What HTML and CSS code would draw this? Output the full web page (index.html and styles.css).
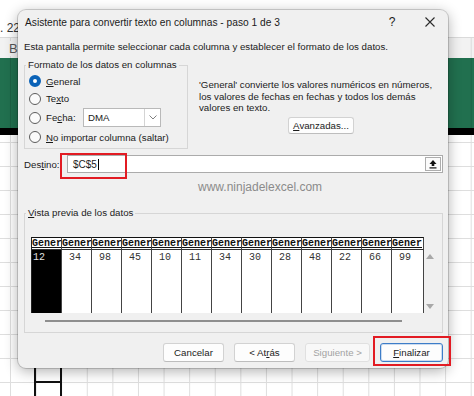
FILE: index.html
```html
<!DOCTYPE html>
<html lang="es">
<head>
    <meta charset="UTF-8">
    <meta name="viewport" content="width=device-width, initial-scale=1.0">
    <title>Asistente para convertir texto en columnas</title>
    <link rel="stylesheet" href="styles.css">
</head>
<body>
    <!-- hoja de Excel detras del dialogo -->
    <div class="sheet">
        <div class="sheet-top"></div>
        <div class="sheet-formula"><span class="cell-ref">. 22</span></div>
        <div class="sheet-headers"><span class="col-letter">B</span></div>
        <div class="sheet-band"></div>
        <div class="sheet-rule"></div>
        <div class="sheet-grid"><div class="sheet-sel"></div></div>
    </div>

    <div class="dialog">
        <div class="titlebar">
            <span class="title">Asistente para convertir texto en columnas - paso 1 de 3</span>
            <span class="help">?</span>
            <span class="close">
                <svg width="10" height="10" viewBox="0 0 10 10"><path d="M0.5 0.5 L9.5 9.5 M9.5 0.5 L0.5 9.5" stroke="#2b2b2b" stroke-width="1.1" fill="none"/></svg>
            </span>
        </div>

        <p class="intro">Esta pantalla permite seleccionar cada columna y establecer el formato de los datos.</p>

        <div class="format-row">
            <fieldset class="group format">
                <legend>Formato de los datos en columnas</legend>
                <div class="radio r1"><span class="dot checked"></span><span><u>G</u>eneral</span></div>
                <div class="radio r2"><span class="dot"></span><span>Te<u>x</u>to</span></div>
                <div class="radio r3">
                    <span class="dot"></span><span class="fecha-label">Fe<u>c</u>ha:</span>
                    <span class="select">
                        <span class="select-value">DMA</span>
                        <span class="select-caret">
                            <svg width="8" height="5" viewBox="0 0 8 5"><path d="M0.5 0.5 L4 4 L7.5 0.5" stroke="#808080" stroke-width="1" fill="none"/></svg>
                        </span>
                    </span>
                </div>
                <div class="radio r4"><span class="dot"></span><span><u>N</u>o importar columna (saltar)</span></div>
            </fieldset>

            <div class="info">
                <p>'General' convierte los valores numéricos en números,<br>los valores de fechas en fechas y todos los demás<br>valores en texto.</p>
                <button class="btn btn-advanced"><u>A</u>vanzadas...</button>
            </div>
        </div>

        <div class="dest-row">
            <span class="dest-label">Des<u>t</u>ino:</span>
            <div class="dest-input">
                <span class="dest-value">$C$5</span><span class="caret-bar"></span>
                <span class="pick-btn">
                    <svg width="10" height="10" viewBox="0 0 10 10"><path d="M5 1 L8.5 5 L6.3 5 L6.3 7 L3.7 7 L3.7 5 L1.5 5 Z" fill="#111"/><rect x="1.5" y="8.3" width="7" height="1.2" fill="#111"/></svg>
                </span>
            </div>
            <span class="mark mark-dest"></span>
        </div>

        <div class="watermark">www.ninjadelexcel.com</div>

        <fieldset class="group preview">
            <legend><u>V</u>ista previa de los datos</legend>
            <div class="preview-body">
                <div class="preview-main">
                    <div class="preview-table">
                        <div class="ph">Gener</div><div class="ph">Gener</div><div class="ph">Gener</div><div class="ph">Gener</div>
                        <div class="ph">Gener</div><div class="ph">Gener</div><div class="ph">Gener</div><div class="ph">Gener</div>
                        <div class="ph">Gener</div><div class="ph">Gener</div><div class="ph">Gener</div><div class="ph">Gener</div>
                        <div class="ph">Gener</div>
                        <div class="pd selected">12</div><div class="pd">&nbsp;34</div><div class="pd">&nbsp;98</div><div class="pd">&nbsp;45</div>
                        <div class="pd">&nbsp;10</div><div class="pd">&nbsp;11</div><div class="pd">&nbsp;34</div><div class="pd">&nbsp;30</div>
                        <div class="pd">&nbsp;28</div><div class="pd">&nbsp;48</div><div class="pd">&nbsp;22</div><div class="pd">&nbsp;66</div>
                        <div class="pd">&nbsp;99</div>
                    </div>
                    <div class="hscroll"></div>
                </div>
                <div class="vscroll">
                    <svg width="8" height="5" viewBox="0 0 8 5"><polygon points="4,0 8,5 0,5" fill="#a8a8a8"/></svg>
                    <svg width="8" height="5" viewBox="0 0 8 5"><polygon points="0,0 8,0 4,5" fill="#a8a8a8"/></svg>
                </div>
            </div>
        </fieldset>

        <div class="buttons">
            <button class="btn w61">Cancelar</button>
            <button class="btn w61">&lt; At<u>r</u>ás</button>
            <button class="btn w65" disabled>Siguiente &gt;</button>
            <span class="finish-wrap">
                <button class="btn w63 btn-default"><u>F</u>inalizar</button>
                <span class="mark mark-finish"></span>
            </span>
        </div>
    </div>
</body>
</html>
```

FILE: styles.css
```css
body {
    margin: 0;
    width: 474px;
    height: 396px;
    overflow: hidden;
    position: relative;
    background: #fff;
    font-family: "Liberation Sans", Arial, sans-serif;
}

/* hoja de fondo */
.sheet {
    height: 396px;
}
.sheet-top {
    height: 10px;
    background: #fff;
}
.sheet-formula {
    height: 28px;
    box-sizing: border-box;
    padding-top: 10px;
    line-height: 16px;
    background: #fff;
    border-bottom: 1px solid #dadada;
    font-size: 12px;
    color: #333;
}
.sheet-headers {
    height: 20px;
    box-sizing: border-box;
    padding-left: 9px;
    line-height: 22px;
    background-color: #f2f2f2;
    background-image: linear-gradient(to right, #dadada 1px, transparent 1px);
    background-size: 25.6px 100%;
    background-position: 10px 0;
    font-size: 13px;
    color: #555;
}
.col-letter {
    background: #f2f2f2;
}
.sheet-band {
    height: 70px;
    background-color: #21704f;
    background-image: linear-gradient(to right, rgba(0, 0, 0, 0.12) 1px, rgba(0, 0, 0, 0) 1px);
    background-size: 25.6px 100%;
    background-position: 10px 0;
}
.sheet-rule {
    height: 7px;
    background-color: #000;
}
.sheet-grid {
    position: relative;
    height: 261px;
    background-color: #fff;
    background-image:
        linear-gradient(to right, #dedede 1px, rgba(255, 255, 255, 0) 1px),
        linear-gradient(to bottom, #dedede 1px, rgba(255, 255, 255, 0) 1px);
    background-size: 25.6px 24px;
    background-position: 10px 7px;
}
.sheet-sel {
    position: absolute;
    left: 34px;
    top: 225px;
    width: 24px;
    height: 40px;
    border-left: 2px solid #111;
    border-right: 2px solid #111;
}
.sheet-sel::after {
    content: "";
    position: absolute;
    left: 0;
    right: 0;
    top: 21px;
    height: 2px;
    background: #111;
}

/* dialogo */
.dialog {
    position: absolute;
    left: 18px;
    top: 10px;
    width: 430px;
    height: 358px;
    box-sizing: border-box;
    padding: 0 5px 0 6px;
    background: #f0f0f0;
    border-radius: 8px;
    box-shadow: 0 0 0 1px rgba(0, 0, 0, 0.16), 0 3px 14px rgba(0, 0, 0, 0.32);
    font-size: 9.7px;
    color: #1b1b1b;
}
.titlebar {
    display: flex;
    align-items: center;
    height: 24px;
    margin-left: 1px;
    font-size: 10.2px;
}
.title {
    flex: 1;
}
.help {
    width: 12px;
    margin-right: 24px;
    text-align: center;
    font-size: 12px;
}
.close {
    width: 16px;
    height: 24px;
    margin-right: 5px;
    display: flex;
    align-items: center;
    justify-content: center;
}
.intro {
    margin: 0;
    padding-top: 6px;
    line-height: 14px;
}

.group {
    margin: 0;
    min-width: 0;
    border: 1px solid #d6d6d6;
}
.group legend {
    line-height: 14px;
    padding: 0 2px;
}

.format-row {
    display: flex;
    align-items: flex-start;
    height: 91px;
    margin-top: 4px;
}
.format {
    width: 164px;
    height: 91px;
    box-sizing: border-box;
    padding: 0 4px 2px 4px;
}
.format legend {
    margin-left: -3px;
}
.radio {
    display: flex;
    align-items: center;
}
.r1 { height: 18px; }
.r2 { height: 17px; }
.r3 { height: 21px; }
.r4 { height: 18px; }
.dot {
    width: 12px;
    height: 12px;
    box-sizing: border-box;
    margin-right: 5px;
    border: 1px solid #5c5c5c;
    border-radius: 50%;
    background: #fbfbfb;
}
.dot.checked {
    border: 4px solid #0a62b7;
    background: #fff;
}
.fecha-label {
    width: 37px;
}
.select {
    width: 78px;
    height: 19px;
    box-sizing: border-box;
    display: flex;
    background: #fff;
    border: 1px solid #b9b9b9;
}
.select-value {
    flex: 1;
    padding-left: 4px;
    line-height: 17px;
}
.select-caret {
    width: 15px;
    display: flex;
    align-items: center;
    justify-content: center;
    border-left: 1px solid #d4d4d4;
}

.info {
    width: 244px;
    margin-left: 11px;
    padding-top: 21px;
}
.info p {
    margin: 0;
    line-height: 11.5px;
}

.btn {
    height: 19px;
    box-sizing: border-box;
    padding: 0;
    background: #fdfdfd;
    border: 1px solid #d2d2d2;
    border-bottom-color: #bdbdbd;
    border-radius: 3px;
    font-family: inherit;
    font-size: 9.7px;
    color: #1b1b1b;
}
.btn:disabled {
    color: #a3a3a3;
    background: #f8f8f8;
    border-color: #e0e0e0;
}
.btn-advanced {
    display: block;
    width: 66px;
    height: 17px;
    margin: 3px auto 0;
}
.btn-default {
    border: 1px solid #3d7dc8;
    box-shadow: inset 0 0 0 1px rgba(61, 125, 200, 0.25);
}
.w61 { width: 61px; }
.w63 { width: 63px; }
.w65 { width: 65px; }

.dest-row {
    position: relative;
    display: flex;
    align-items: center;
    height: 18px;
    margin-top: 6px;
}
.dest-label {
    width: 43px;
}
.dest-input {
    flex: 1;
    height: 18px;
    box-sizing: border-box;
    display: flex;
    align-items: center;
    padding-left: 5px;
    background: #fff;
    border: 1px solid #ababab;
}
.dest-value {
    font-size: 10px;
}
.caret-bar {
    width: 1px;
    height: 11px;
    margin-left: 1px;
    background: #000;
}
.pick-btn {
    width: 16px;
    height: 14px;
    box-sizing: border-box;
    margin-left: auto;
    margin-right: 1px;
    display: flex;
    align-items: center;
    justify-content: center;
    border: 1px solid #adadad;
    background: #fbfbfb;
}

.mark {
    position: absolute;
    box-sizing: border-box;
    border: 2px solid #e21b23;
}
.mark-dest {
    left: 36px;
    top: -2px;
    width: 67px;
    height: 26px;
}

.watermark {
    margin: 7px 0 0 174px;
    line-height: 14px;
    font-size: 12px;
    color: #8b8b8b;
}

.preview {
    margin-top: 12px;
    padding: 17px 6px 10px 6px;
}
.preview legend {
    margin-left: -5px;
}
.preview-body {
    display: flex;
}
.preview-table {
    display: grid;
    grid-template-columns: repeat(12, 30px) 32px;
    width: 392px;
    box-sizing: border-box;
    border-left: 1px solid #222;
    background: #fff;
    font-family: "Liberation Mono", "Courier New", monospace;
    font-size: 10px;
}
.ph {
    height: 13px;
    box-sizing: border-box;
    overflow: hidden;
    white-space: nowrap;
    border-top: 1px solid #111;
    border-bottom: 1px solid #333;
    border-right: 1px solid #444;
    font-weight: bold;
    text-decoration: underline;
    line-height: 11px;
    color: #111;
}
.pd {
    height: 63px;
    box-sizing: border-box;
    padding: 2px 0 0 1px;
    border-right: 1px solid #444;
    color: #333;
    white-space: nowrap;
}
.pd.selected {
    background: #000;
    color: #e0e0e0;
}
.hscroll {
    width: 357px;
    height: 2px;
    margin: 7px 0 0 14px;
    background: #8e8e8e;
}
.vscroll {
    width: 13px;
    height: 76px;
    box-sizing: border-box;
    padding: 17px 0 4px;
    display: flex;
    flex-direction: column;
    justify-content: space-between;
    align-items: center;
}

.buttons {
    display: flex;
    justify-content: flex-end;
    gap: 10px;
    margin-top: 10px;
}
.finish-wrap {
    position: relative;
    display: flex;
}
.mark-finish {
    left: -7px;
    top: -7px;
    width: 78px;
    height: 30px;
}
```
